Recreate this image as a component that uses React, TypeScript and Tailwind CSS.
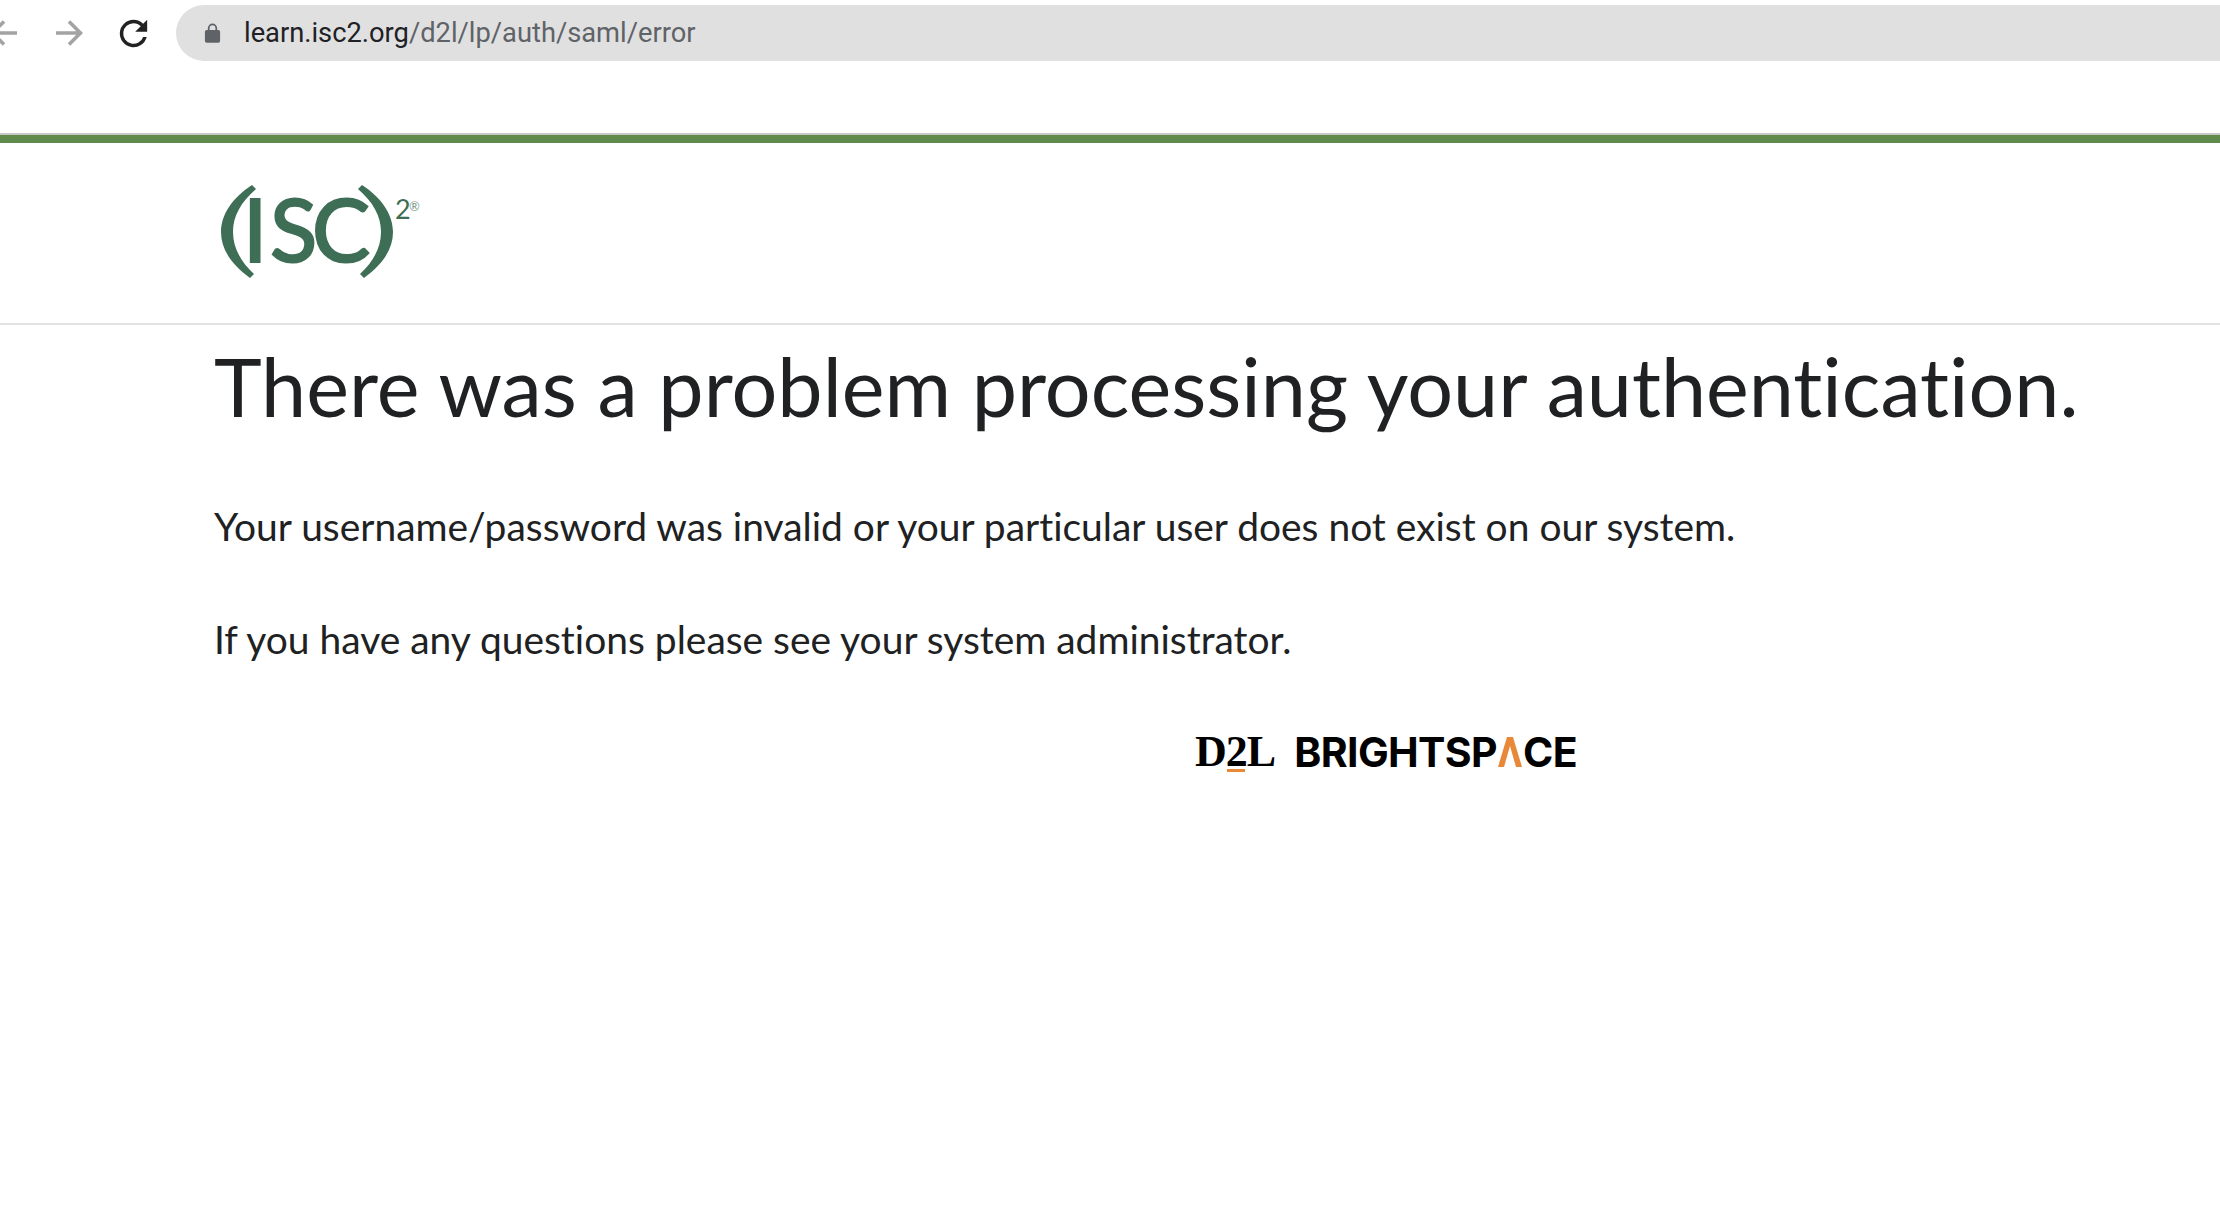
function ArrowIcon({ flip }: { flip?: boolean }) {
  return (
    <svg viewBox="0 0 27 26" className="w-[27px] h-[26px] text-[#a3a3a3]" fill="none" stroke="currentColor" strokeWidth="3.6">
      {flip ? <path d="M27 13H2M14 1.500 2.500 13 14 24.500" /> : <path d="M0 13h25M13 1.500 24.500 13 13 24.500" />}
    </svg>
  );
}

function IscLogo() {
  return (
    <div className="ml-[220px] w-[210px] h-[100px] text-[#3e6e56]">
      <svg viewBox="0 0 210 100" className="w-[210px] h-[100px] overflow-visible" fill="currentColor">
        <path d="M32 0 L36 4 C21 17 13 31 13 47 C13 63 21 77 34 89 L30 93 C11 79 1 64 1 47 C1 30 12 13 32 0 Z" />
        <text x="23 50 92" y="77" fontFamily="Lato" fontSize="87" stroke="currentColor" strokeWidth="2.2">ISC</text>
        <path d="M142 0 L138 4 C153 17 161 31 161 47 C161 63 153 77 140 89 L144 93 C163 79 173 64 173 47 C173 30 162 13 142 0 Z" />
        <text x="175" y="34" fontFamily="Lato" fontSize="27">2</text>
        <text x="189" y="26" fontFamily="Lato" fontSize="13" fill="#7a9a8a">®</text>
      </svg>
    </div>
  );
}

function BrightspaceLogo() {
  return (
    <div className="flex items-center mt-[66px] ml-[1195px] text-black">
      <span className="relative font-['Liberation_Serif'] text-[44px] leading-none font-bold tracking-[-1px]">
        D2L
        <span className="absolute left-[32px] bottom-[2px] w-[18px] h-[3px] bg-[#e8893a]" />
      </span>
      <span className="ml-[19px] flex items-center font-['Inter'] text-[41px] leading-none font-bold tracking-[-0.6px]">
        BRIGHTSP
        <svg viewBox="0 0 26 30" className="w-[26px] h-[30px]" fill="#e8893a">
          <path d="M10 0h6l9 30h-6L13 9 7 30H1z" />
        </svg>
        CE
      </span>
    </div>
  );
}

export default function App() {
  return (
    <div className="h-[1222px] w-[2220px] overflow-hidden bg-white font-['Lato',sans-serif] text-[#202122] [font-variant-ligatures:none]">
      <div className="h-[133px] flex items-start pt-[5px]">
        <div className="flex items-center h-[56px] ml-[-10px] mr-[22px]">
          <ArrowIcon flip />
          <span className="ml-[39px]">
            <ArrowIcon />
          </span>
          <svg viewBox="0 0 24 24" className="w-[41px] h-[41px] ml-[30px] text-[#222]" fill="currentColor">
            <path d="M17.650 6.350A7.960 7.960 0 0 0 12 4a8 8 0 1 0 7.730 10h-2.080A6 6 0 1 1 12 6c1.660 0 3.140.690 4.220 1.780L13 11h7V4z" />
          </svg>
        </div>
        <div className="flex-1 h-[56px] rounded-l-[28px] bg-[#e0e0e0] flex items-center pl-[28px] font-['Roboto']">
          <svg viewBox="0 0 14 18" className="w-[17px] h-[21px] text-[#5f6368] mr-[23px]" fill="currentColor">
            <path d="M12 6h-1V4.500a4 4 0 0 0-8 0V6H2a1.500 1.500 0 0 0-1.500 1.500v8A1.500 1.500 0 0 0 2 17h10a1.500 1.500 0 0 0 1.500-1.500v-8A1.500 1.500 0 0 0 12 6zM4.500 6V4.500a2.500 2.500 0 0 1 5 0V6z" />
          </svg>
          <span className="text-[27.3px] leading-none text-[#202124] mt-[1px]">
            learn.isc2.org<span className="text-[#5f6368]">/d2l/lp/auth/saml/error</span>
          </span>
        </div>
      </div>
      <div className="h-[10px] bg-[#5e8a4c] border-t-2 border-[#c8c8c8]" />
      <header className="h-[182px] pt-[42px] border-b-2 border-[#e3e3e3]">
        <IscLogo />
      </header>
      <main className="pl-[214px]">
        <h1 className="text-[80.9px] leading-[1.2] font-normal mt-[12px]">There was a problem processing your authentication.</h1>
        <p className="text-[38.95px] leading-[50px] mt-[67px]">Your username/password was invalid or your particular user does not exist on our system.</p>
        <p className="text-[38.95px] leading-[50px] mt-[63px]">If you have any questions please see your system administrator.</p>
      </main>
      <BrightspaceLogo />
    </div>
  );
}
